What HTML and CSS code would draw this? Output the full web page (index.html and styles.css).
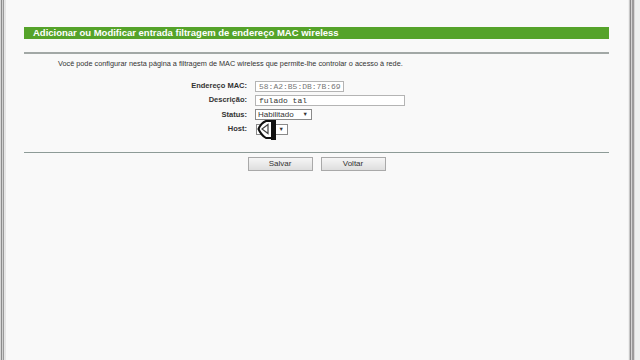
FILE: index.html
```html
<!DOCTYPE html>
<html lang="pt">
<head>
    <meta charset="UTF-8">
    <title>Filtragem de MAC wireless</title>
    <link rel="stylesheet" href="styles.css">
</head>
<body>
    <div class="window">
        <div class="edge-left"></div>
        <div class="main">
            <div class="title-bar">Adicionar ou Modificar entrada filtragem de endereço MAC wireless</div>
            <div class="rule top"></div>
            <p class="intro">Você pode configurar nesta página a filtragem de MAC wireless que permite-lhe controlar o acesso à rede.</p>

            <div class="form">
                <label class="label">Endereço MAC:</label>
                <div class="field"><span class="input mac">58:A2:B5:DB:7B:69</span></div>

                <label class="label">Descrição:</label>
                <div class="field"><span class="input desc">fulado tal</span></div>

                <label class="label">Status:</label>
                <div class="field"><span class="select status">Habilitado <i class="arrow">&#9660;</i></span></div>

                <label class="label">Host:</label>
                <div class="field host-field">
                    <span class="select host">&nbsp;<i class="arrow">&#9660;</i></span>
                    <!-- mouse pointer sitting on the select -->
                    <svg class="pointer" width="22" height="22" viewBox="0 0 22 22">
                        <path d="M1.5 10 Q4 4 9 2 L15 2 L15 19 L9 19 Q4 16 1.5 10 Z" fill="#fff" stroke="#111" stroke-width="2"/>
                        <path d="M5 10 L11 5.5 L11 14.5 Z" fill="#fff" stroke="#444" stroke-width="1.2"/>
                        <rect x="14" y="1" width="5" height="20" fill="#111"/>
                    </svg>
                </div>
            </div>

            <div class="rule bottom"></div>
            <div class="buttons">
                <button class="btn">Salvar</button>
                <button class="btn">Voltar</button>
            </div>
        </div>
        <div class="edge-right"></div>
        <div class="gutter"></div>
    </div>
</body>
</html>
```

FILE: styles.css
```css
html, body {
    margin: 0;
    padding: 0;
    height: 100%;
}

body {
    font-family: "Liberation Sans", Arial, sans-serif;
    background-color: #f9f9f9;
    color: #222;
}

.window {
    display: flex;
    height: 360px;
}

.edge-left {
    width: 6px;
    background: linear-gradient(to right, #d6d6d6 0, #d6d6d6 1px, #8c8c8c 1px, #8c8c8c 2px, #d0d0d0 2px, #d0d0d0 3px, #9a9a9a 3px, #9a9a9a 4px, #e6e6e6 4px, #e6e6e6 6px);
}

.edge-right {
    width: 6px;
    background: linear-gradient(to right, #c8c8c8 0, #c8c8c8 1px, #8a8a8a 1px, #8a8a8a 2px, #d4d4d4 2px, #d4d4d4 3px, #9c9c9c 3px, #9c9c9c 5px, #d8d8d8 5px);
}

.gutter {
    width: 5px;
    background-color: #eef1f0;
}

.main {
    flex: 1;
    padding: 27px 19px 0 18px;
    border-right: 1px solid #f0f0f0;
}

.title-bar {
    height: 12px;
    line-height: 12px;
    background-color: #55a32a;
    color: #fff;
    font-size: 9.5px;
    font-weight: bold;
    padding-left: 9px;
}

.rule {
    height: 2px;
    background-color: #a2a8a6;
}

.rule.top {
    margin-top: 13px;
}

.rule.bottom {
    margin-top: 15px;
    height: 1.5px;
    background-color: #8d9b97;
}

.intro {
    margin: 5px 0 0 34px;
    font-size: 7.3px;
    line-height: 10px;
    color: #333;
}

.form {
    display: grid;
    grid-template-columns: 223px auto;
    grid-auto-rows: 14.4px;
    column-gap: 8px;
    margin-top: 10px;
}

.label {
    text-align: right;
    font-size: 7.5px;
    font-weight: bold;
    line-height: 14.4px;
    color: #333;
}

.field {
    display: flex;
    align-items: center;
}

.input {
    box-sizing: border-box;
    height: 11px;
    line-height: 9px;
    border: 1px solid #b4b4b4;
    background-color: #fff;
    font-family: "Liberation Mono", "Courier New", monospace;
    font-size: 8px;
    padding-left: 3px;
    color: #555;
}

.input.mac {
    width: 89px;
    color: #777;
}

.input.desc {
    width: 150px;
    color: #333;
}

.select {
    box-sizing: border-box;
    height: 11px;
    line-height: 9px;
    border: 1px solid #8a8a8a;
    background-color: #fff;
    font-size: 8px;
    padding-left: 2px;
    display: flex;
    justify-content: space-between;
    color: #333;
}

.select .arrow {
    font-style: normal;
    font-size: 5.5px;
    padding-right: 3px;
}

.select.status {
    width: 57px;
}

.select.host {
    width: 32px;
    margin-left: 1px;
}

.host-field {
    position: relative;
}

.pointer {
    position: absolute;
    left: 2px;
    top: -3px;
}

.buttons {
    display: flex;
    justify-content: center;
    gap: 8px;
    margin-top: 3.5px;
}

.btn {
    width: 65px;
    height: 14px;
    padding: 0;
    border: 1px solid #a9a9a9;
    background: linear-gradient(#f6f6f6, #dedede);
    font-family: "Liberation Sans", Arial, sans-serif;
    font-size: 8px;
    color: #333;
}
```
